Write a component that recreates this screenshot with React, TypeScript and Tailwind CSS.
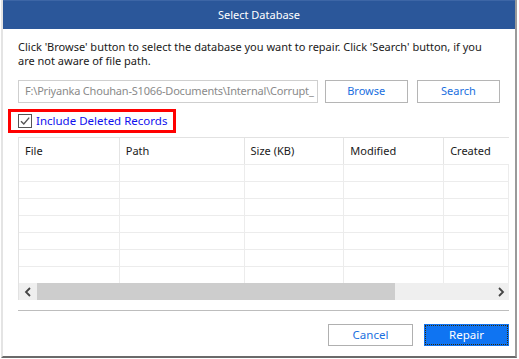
import React from "react";

const cols = [
  { name: "File", w: 101 },
  { name: "Path", w: 125 },
  { name: "Size (KB)", w: 100 },
  { name: "Modified", w: 100 },
  { name: "Created", w: 65 },
];

export default function App() {
  const rows = [0, 1, 2, 3, 4, 5, 6];
  return (
    <div
      className="w-[519px] h-[359px] bg-white relative overflow-hidden"
      style={{ fontFamily: '"Noto Sans", "Open Sans", sans-serif' }}
    >
      <div className="ml-[1px] w-[516px] h-[358px] flex flex-col border-l-2 border-l-[#e4e4e4] border-r-2 border-r-[#9a9a9a] border-b-2 border-b-[#6a6a6a] bg-white">
        <div className="h-[29px] bg-[#2b579a] flex items-center justify-center text-white text-[11px] border-t border-t-[#3d66a6]">
          Select Database
        </div>
        <div className="px-[15px] flex flex-col">
          <p className="mt-[11px] text-[11px] leading-[14px] text-[#1a1a1a] pr-[2px]">
            Click 'Browse' button to select the database you want to repair. Click 'Search' button, if you are not aware of file path.
          </p>
          <div className="mt-[12px] flex items-center h-[23px]">
            <div className="w-[306px] h-[23px] border border-[#cfcfcf] flex items-center pl-[6px] text-[11px] tracking-[-0.2px] text-[#8a8a8a] overflow-hidden whitespace-nowrap">
              F:\Priyanka Chouhan-S1066-Documents\Internal\Corrupt_
            </div>
            <button className="ml-[7px] w-[85px] h-[23px] border border-[#b5b5b5] text-[11px] text-[#1a6fe0] bg-white">
              Browse
            </button>
            <button className="ml-[9px] w-[85px] h-[23px] border border-[#b5b5b5] text-[11px] text-[#1a6fe0] bg-white">
              Search
            </button>
          </div>
          <div className="mt-[6px] -ml-[10px] w-[168px] h-[24px] border-[3px] border-[#ff0000] flex items-center pl-[7px]">
            <div className="w-[14px] h-[14px] border border-[#555] flex items-center justify-center bg-white">
              <svg width="12" height="12" viewBox="0 0 12 12">
                <path d="M2 6.2 L4.8 9 L10.2 2.6" fill="none" stroke="#555" strokeWidth="1.4" />
              </svg>
            </div>
            <span className="ml-[4px] text-[11.5px] text-[#1010ee]">Include Deleted Records</span>
          </div>
          <div className="mt-[4px] w-[491px] border-l border-t border-[#e2e2e2] flex flex-col">
            <div className="flex h-[26px]">
              {cols.map((c, i) => (
                <div
                  key={c.name}
                  style={{ width: c.w }}
                  className={`h-full flex items-center pl-[6px] text-[11px] text-[#1a1a1a] ${i < cols.length - 1 ? "border-r border-r-[#e4e4e4]" : ""}`}
                >
                  {c.name}
                </div>
              ))}
            </div>
            {rows.map((r) => (
              <div key={r} className="flex h-[17px] border-t border-t-[#ececec]">
                {cols.map((c) => (
                  <div
                    key={c.name}
                    style={{ width: c.w }}
                    className="h-full border-r border-r-[#ececec]"
                  />
                ))}
              </div>
            ))}
            <div className="flex h-[17px] bg-[#efefef] items-center">
              <div className="w-[18px] h-full flex items-center justify-center">
                <svg width="8" height="10" viewBox="0 0 8 10">
                  <path d="M6 1 L2 5 L6 9" fill="none" stroke="#444" strokeWidth="1.8" />
                </svg>
              </div>
              <div className="w-[358px] h-full bg-[#cdcdcd]" />
              <div className="flex-1" />
              <div className="w-[16px] h-full flex items-center justify-center">
                <svg width="8" height="10" viewBox="0 0 8 10">
                  <path d="M2 1 L6 5 L2 9" fill="none" stroke="#444" strokeWidth="1.8" />
                </svg>
              </div>
            </div>
          </div>
          <div className="mt-[10px] w-[491px] h-[1px] bg-[#bdbdbd]" />
          <div className="mt-[13px] flex justify-end w-[491px]">
            <button className="w-[85px] h-[22px] border border-[#b0b0b0] text-[11.5px] text-[#1a6fe0] bg-white">
              Cancel
            </button>
            <button className="ml-[11px] w-[85px] h-[22px] bg-[#0f74f2] text-[11.5px] text-white p-[1px]">
              <div className="w-full h-full border border-dotted border-[#3a2a00] flex items-center justify-center">
                Repair
              </div>
            </button>
          </div>
        </div>
      </div>
    </div>
  );
}
